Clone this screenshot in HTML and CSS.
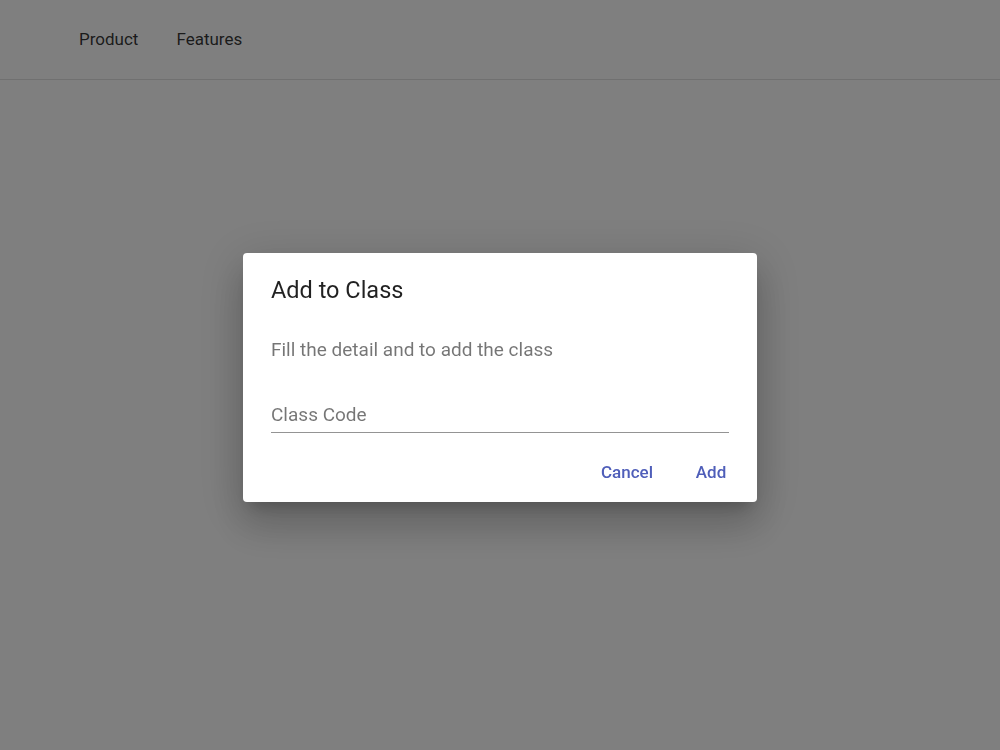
FILE: index.html
```html
<!DOCTYPE html>
<html lang="en">
<head>
    <meta charset="UTF-8">
    <meta name="viewport" content="width=device-width, initial-scale=1.0">
    <title>Add to Class</title>
    <link rel="stylesheet" href="styles.css">
</head>
<body>
    <header class="topbar">
        <nav class="nav">
            <a class="nav-link" href="#">Product</a>
            <a class="nav-link" href="#">Features</a>
        </nav>
    </header>

    <div class="backdrop">
        <div class="dialog" role="dialog" aria-labelledby="dialogTitle">
            <h2 class="dialog-title" id="dialogTitle">Add to Class</h2>
            <div class="dialog-content">
                <p class="dialog-text">Fill the detail and to add the class</p>
                <div class="field">
                    <input type="text" id="classCode" name="classCode" placeholder="Class Code">
                </div>
            </div>
            <div class="dialog-actions">
                <button class="btn" id="cancelButton">Cancel</button>
                <button class="btn" id="addButton">Add</button>
            </div>
        </div>
    </div>
</body>
</html>
```

FILE: styles.css
```css
body { margin: 0; font-family: Roboto, "Liberation Sans", sans-serif; background-color: #fff; color: rgba(0, 0, 0, 0.87); }
.topbar { height: 79px; border-bottom: 1px solid rgba(0, 0, 0, 0.12); display: flex; align-items: center; }
.nav { display: flex; gap: 38px; padding-left: 79px; margin-top: -2px; }
.nav-link { font-size: 17px; color: rgba(0, 0, 0, 0.8); text-decoration: none; }

.backdrop { position: fixed; inset: 0; background-color: rgba(0, 0, 0, 0.5); display: flex; align-items: center; justify-content: center; }
.dialog { width: 514px; background-color: #fff; border-radius: 4px; box-shadow: 0 11px 15px -7px rgba(0,0,0,0.2), 0 24px 38px 3px rgba(0,0,0,0.14), 0 9px 46px 8px rgba(0,0,0,0.12); margin-top: 4px; }
.dialog-title { margin: 0; padding: 21px 28px 0; font-size: 23.5px; font-weight: 400; line-height: 32px; color: rgba(0, 0, 0, 0.87); }
.dialog-content { padding: 32px 28px 0; }
.dialog-text { margin: 0; font-size: 19px; line-height: 24px; color: rgba(0, 0, 0, 0.54); }
.field { margin-top: 38px; }
.field input { display: block; box-sizing: content-box; width: 100%; height: 22px; padding: 4px 0 6px; border: none; border-bottom: 1px solid rgba(0, 0, 0, 0.42); font-family: inherit; font-size: 19px; color: rgba(0, 0, 0, 0.87); outline: none; background: none; }
.field input::placeholder { color: rgba(0, 0, 0, 0.54); opacity: 1; }
.dialog-actions { display: flex; justify-content: flex-end; gap: 8px; padding: 19px 14px 10px; }
.btn { min-width: 64px; padding: 6px 16px; border: none; border-radius: 4px; background: none; font-family: inherit; font-size: 17px; font-weight: 500; line-height: 28px; color: #4f5eb9; cursor: pointer; }
.btn:first-child { padding-right: 18px; }
.btn:hover { background-color: rgba(63, 81, 181, 0.04); }
```
